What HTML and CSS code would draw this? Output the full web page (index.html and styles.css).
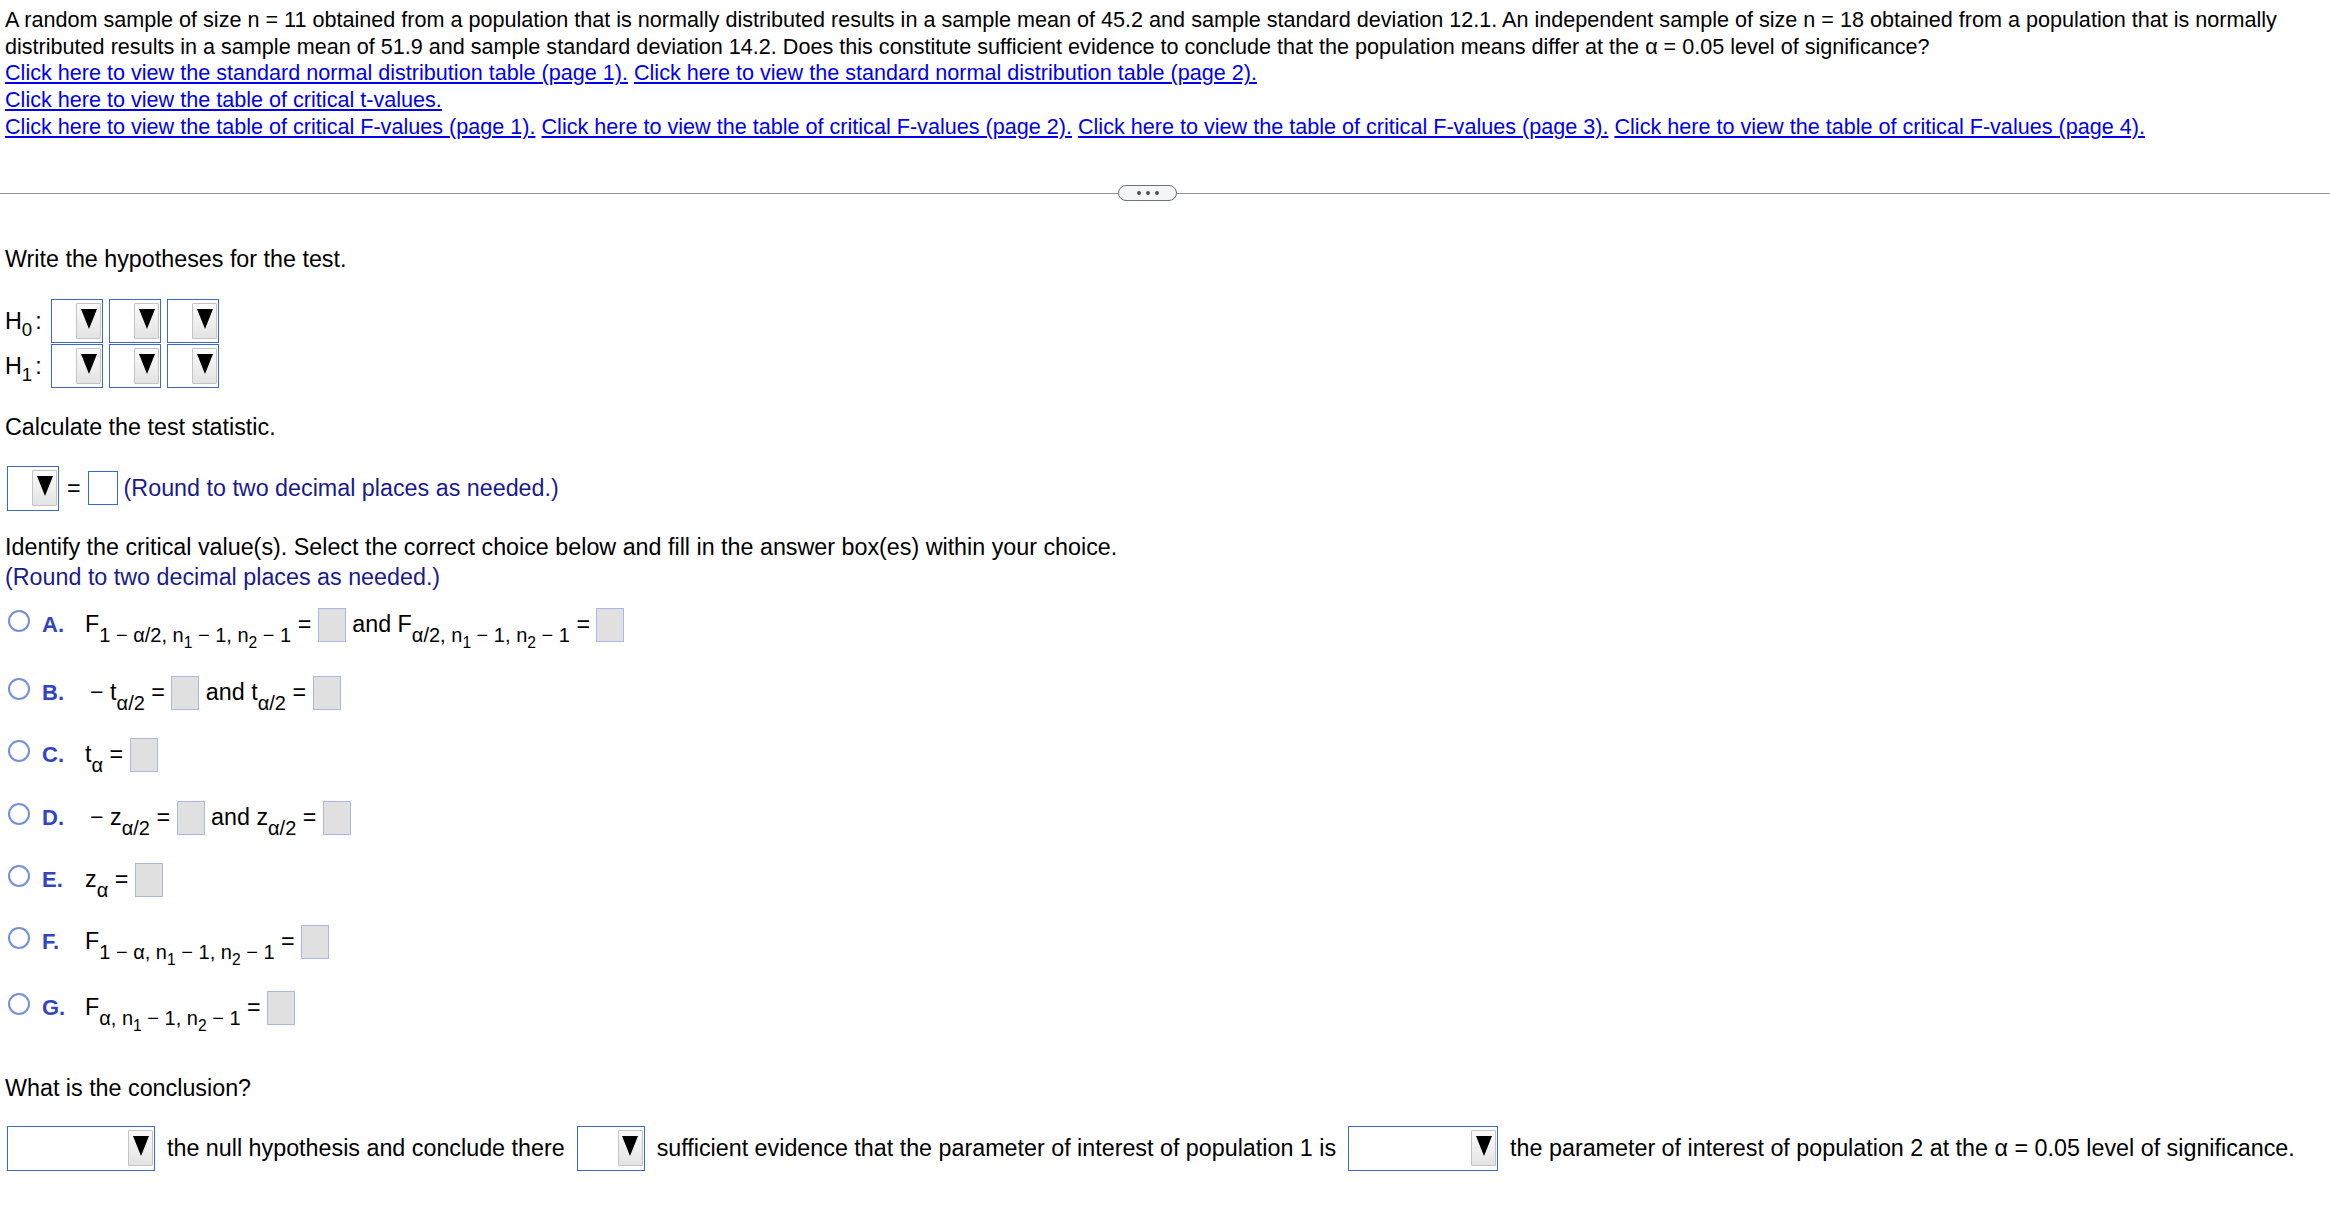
FILE: index.html
```html
<!DOCTYPE html>
<html lang="en">
<head>
<meta charset="utf-8">
<title>Hypothesis test</title>
<link rel="stylesheet" href="styles.css">
</head>
<body>
<div class="page">
  <p class="stem">A random sample of size n = 11 obtained from a population that is normally distributed results in a sample mean of 45.2 and sample standard deviation 12.1. An independent sample of size n = 18 obtained from a population that is normally<br>distributed results in a sample mean of 51.9 and sample standard deviation 14.2. Does this constitute sufficient evidence to conclude that the population means differ at the α = 0.05 level of significance?</p>
  <div class="links"><a href="#">Click here to view the standard normal distribution table (page 1).</a> <a href="#">Click here to view the standard normal distribution table (page 2).</a></div>
  <div class="links"><a href="#">Click here to view the table of critical t-values.</a></div>
  <div class="links"><a href="#">Click here to view the table of critical F-values (page 1).</a> <a href="#">Click here to view the table of critical F-values (page 2).</a> <a href="#">Click here to view the table of critical F-values (page 3).</a> <a href="#">Click here to view the table of critical F-values (page 4).</a></div>

  <div class="divider"><span class="rule"></span><span class="pill"><i></i><i></i><i></i></span><span class="rule"></span></div>

  <p class="q">Write the hypotheses for the test.</p>
  <div class="hyp">
    <div class="hrow"><span class="hlabel">H<sub>0</sub><span class="colon">:</span></span><span class="dd"><span class="dd-btn"></span></span><span class="dd"><span class="dd-btn"></span></span><span class="dd"><span class="dd-btn"></span></span></div>
    <div class="hrow"><span class="hlabel">H<sub>1</sub><span class="colon">:</span></span><span class="dd"><span class="dd-btn"></span></span><span class="dd"><span class="dd-btn"></span></span><span class="dd"><span class="dd-btn"></span></span></div>
  </div>

  <p class="q q-calc">Calculate the test statistic.</p>
  <div class="stat">
    <span class="dd"><span class="dd-btn"></span></span>
    <span class="eq">=</span>
    <span class="inbox"></span>
    <span class="navy">(Round to two decimal places as needed.)</span>
  </div>

  <p class="q q-ident">Identify the critical value(s). Select the correct choice below and fill in the answer box(es) within your choice.</p>
  <p class="navy round2">(Round to two decimal places as needed.)</p>

  <div class="opts">
    <div class="opt tall"><span class="radio"></span><span class="letter">A.</span><span class="expr">F<sub>1 − α/2, n<sub>1</sub> − 1, n<sub>2</sub> − 1</sub> = <span class="ans"></span> and F<sub>α/2, n<sub>1</sub> − 1, n<sub>2</sub> − 1</sub> = <span class="ans"></span></span></div>
    <div class="opt"><span class="radio"></span><span class="letter">B.</span><span class="expr"><span class="neg">−</span> t<sub>α/2</sub> = <span class="ans"></span> and t<sub>α/2</sub> = <span class="ans"></span></span></div>
    <div class="opt o-c"><span class="radio"></span><span class="letter">C.</span><span class="expr">t<sub>α</sub> = <span class="ans"></span></span></div>
    <div class="opt"><span class="radio"></span><span class="letter">D.</span><span class="expr"><span class="neg">−</span> z<sub>α/2</sub> = <span class="ans"></span> and z<sub>α/2</sub> = <span class="ans"></span></span></div>
    <div class="opt"><span class="radio"></span><span class="letter">E.</span><span class="expr">z<sub>α</sub> = <span class="ans"></span></span></div>
    <div class="opt tall o-f"><span class="radio"></span><span class="letter">F.</span><span class="expr">F<sub>1 − α, n<sub>1</sub> − 1, n<sub>2</sub> − 1</sub> = <span class="ans"></span></span></div>
    <div class="opt"><span class="radio"></span><span class="letter">G.</span><span class="expr">F<sub>α, n<sub>1</sub> − 1, n<sub>2</sub> − 1</sub> = <span class="ans"></span></span></div>
  </div>

  <p class="q q-concl">What is the conclusion?</p>
  <div class="concl">
    <span class="dd dd-wide"><span class="dd-btn"></span></span>
    <span>the null hypothesis and conclude there</span>
    <span class="dd dd-mid"><span class="dd-btn"></span></span>
    <span>sufficient evidence that the parameter of interest of population 1 is</span>
    <span class="dd dd-wide2"><span class="dd-btn"></span></span>
    <span>the parameter of interest of population 2 at the α = 0.05 level of significance.</span>
  </div>
</div>
</body>
</html>
```

FILE: styles.css
```css
* { box-sizing: border-box; }

html, body {
  margin: 0;
  padding: 0;
  background: #fff;
}

body {
  font-family: "Liberation Sans", Arial, Helvetica, sans-serif;
  font-size: 23.3px;
  color: #000;
}

.page {
  padding: 7px 5px 40px;
}

.stem,
.links {
  margin: 0;
  font-size: 21.6px;
  line-height: 26.7px;
}

.links a {
  color: #0000ee;
  text-decoration: underline;
  text-underline-offset: 2px;
}

/* divider with pill */
.divider {
  display: grid;
  grid-template-columns: 1118px 59px 1fr;
  align-items: center;
  height: 16px;
  margin: 44.5px -5px 0;
}

.rule {
  height: 1px;
  background: #8a9099;
}

.pill {
  height: 16px;
  border: 1.5px solid #6a727c;
  border-radius: 9px;
  background: #f3f5f8;
  display: flex;
  justify-content: center;
  align-items: center;
  gap: 5px;
}

.pill i {
  width: 4px;
  height: 4px;
  border-radius: 50%;
  background: #4b5159;
}

/* question texts */
.q {
  margin: 44.5px 0 0;
  line-height: 27px;
}

.q-calc { margin-top: 25.5px; }
.q-ident { margin-top: 23.5px; }
.q-concl { margin-top: 24px; }

.navy { color: #1a1a8e; }

.round2 {
  margin: 3px 0 0;
  line-height: 27px;
}

sub {
  font-size: 0.86em;
  vertical-align: -0.48em;
  line-height: 0;
}

sub sub {
  font-size: 0.78em;
  vertical-align: -0.4em;
}

.hlabel sub {
  font-size: 0.8em;
  vertical-align: -0.4em;
}

.colon {
  margin-left: 3px;
}

/* dropdown */
.dd {
  flex: none;
  width: 52px;
  height: 44px;
  border: 1px solid #3c67cf;
  background: #fff;
  display: flex;
  justify-content: flex-end;
  align-items: flex-start;
  padding: 3px 1px 0 0;
}

.dd-btn {
  width: 25px;
  height: 36px;
  border: 1px solid #c3c3c3;
  border-radius: 1px;
  background: linear-gradient(#fbfbfb, #e3e3e3);
  display: flex;
  justify-content: center;
  padding-top: 5px;
}

.dd-btn::before {
  content: "";
  width: 0;
  height: 0;
  border-left: 8px solid transparent;
  border-right: 8px solid transparent;
  border-top: 20px solid #000;
}

/* hypotheses */
.hyp {
  margin-top: 26.5px;
  display: flex;
  flex-direction: column;
  gap: 1px;
}

.hrow {
  display: flex;
  align-items: center;
  height: 44px;
}

.hlabel {
  width: 46px;
}

.hrow .dd + .dd {
  margin-left: 6px;
}

/* test statistic */
.stat {
  margin-top: 25px;
  display: flex;
  align-items: center;
  height: 45px;
}

.stat .dd {
  height: 45px;
  margin-left: 2px;
}

.eq {
  margin: 0 7px 0 8px;
}

.inbox {
  width: 30px;
  height: 34px;
  border: 1px solid #3c67cf;
  background: #fff;
  margin-right: 6px;
}

/* options */
.opts {
  margin-top: 15px;
}

.opt {
  height: 62px;
  line-height: 36px;
  white-space: nowrap;
}

.opt.tall { height: 68px; }
.opt.o-c { height: 63px; }
.opt.o-f { height: 66px; }

.radio {
  display: inline-block;
  width: 22px;
  height: 22px;
  margin-left: 3px;
  margin-right: 12px;
  border: 2px solid #7590da;
  border-radius: 50%;
  background: radial-gradient(circle at 50% 40%, #ffffff 55%, #eef1fa 100%);
  vertical-align: 0;
}

.letter {
  display: inline-block;
  width: 43px;
  font-size: 22px;
  font-weight: bold;
  color: #3044c4;
}

.neg {
  margin-left: 5px;
}

.ans {
  display: inline-block;
  width: 28px;
  height: 34px;
  border: 1px solid #a7b9e6;
  background: #e0e0e0;
  vertical-align: -10px;
}

/* conclusion */
.concl {
  margin-top: 23.5px;
  display: flex;
  align-items: center;
  gap: 12px;
  height: 45px;
  white-space: nowrap;
  padding-left: 2px;
}

.concl .dd {
  height: 45px;
}

.dd-wide { width: 148px; }
.dd-mid { width: 68px; }
.dd-wide2 { width: 150px; }
```
